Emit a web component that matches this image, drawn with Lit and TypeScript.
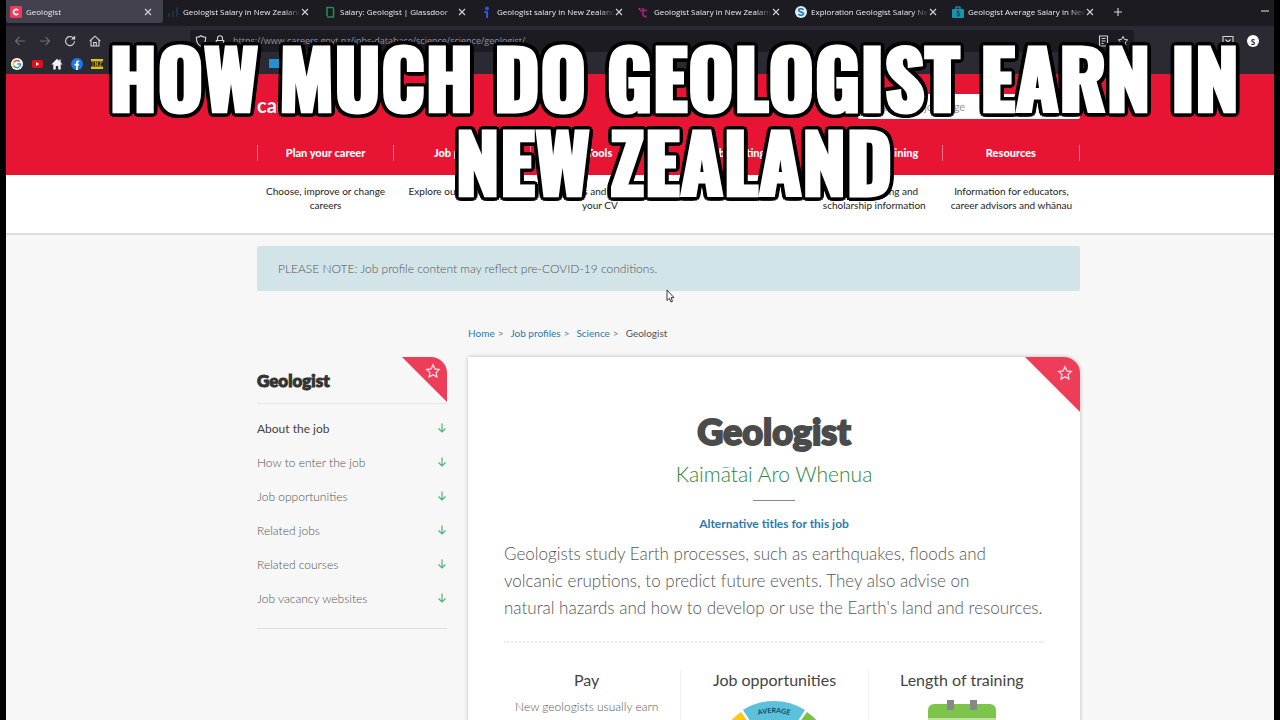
import { LitElement, html, css, svg } from "lit";
import { customElement } from "lit/decorators.js";
import { classMap } from "lit/directives/class-map.js";

const star = svg`<path d="M12 2.8l2.9 6 6.5.9-4.7 4.6 1.1 6.6-5.8-3.1-5.8 3.1 1.1-6.6L2.6 9.7l6.5-.9z" />`;

const tabIcons = [
  svg`<rect width="12" height="12" rx="1" fill="#f0375c" /><path d="M8.2 4.4A2.6 2.6 0 1 0 8.2 7.6" fill="none" stroke="#fff" stroke-width="1.7" />`,
  svg`<path d="M1 11V7h2v4M5 11V5h2v6M9 11V1h2v10" fill="#1c3345" />`,
  svg`<path d="M3 10V1.5h6.500M3 11h6.500V1.500" fill="none" stroke="#1f8f45" stroke-width="1.600" />`,
  svg`<circle cx="6" cy="2.500" r="2" fill="#2f55d8" /><path d="M3 5.200h4V12H5V7H3z" fill="#2f55d8" />`,
  svg`<path d="M5 2v6.500q0 2 2.500 2H9M2 4.500h7" fill="none" stroke="#8f2274" stroke-width="2" /><circle cx="1.500" cy="3" r="1" fill="#d6336c" />`,
  svg`<circle cx="6" cy="6" r="6" fill="#d9eefa" /><path d="M8.500 3.700C7 2 3.500 2.600 3.700 4.400c.2 2 4.800 1.200 4.800 3.300C8.400 9.500 5 9.800 3.400 8.200" fill="none" stroke="#2473a8" stroke-width="1.600" />`,
  svg`<path d="M4 3V1h4v2" fill="none" stroke="#21a3bd" stroke-width="1.200" /><rect x="0" y="3" width="12" height="9" rx="1" fill="#1c93ad" /><path d="M7.500 5.200H5v1.900h2.500V9.500H4.500M6 4v7" fill="none" stroke="#0c5468" stroke-width=".9" />`,
];

const tabs = [
  "Geologist",
  "Geologist Salary in New Zealand - Average",
  "Salary: Geologist | Glassdoor",
  "Geologist salary in New Zealand",
  "Geologist Salary in New Zealand",
  "Exploration Geologist Salary New Zealand",
  "Geologist Average Salary in New Zealand",
];

const bookmarks = [
  { name: "Google", icon: svg`<circle cx="6" cy="6" r="6" fill="#fff" /><g fill="none" stroke-width="1.500"><path d="M8.600 3.500A3.600 3.600 0 0 0 2.900 4.200" stroke="#ea4335" /><path d="M2.900 4.200a3.600 3.600 0 0 0 0 3.600" stroke="#fbbc05" /><path d="M2.900 7.800a3.600 3.600 0 0 0 5.500 1" stroke="#34a853" /><path d="M8.400 8.800A3.600 3.600 0 0 0 9.600 6H6.200" stroke="#4285f4" /></g>` },
  { name: "YouTube", icon: svg`<rect x="1" y="2" width="11" height="8" rx="2" fill="#e60d18" /><path d="M5 4l3.200 2L5 8z" fill="#fff" />` },
  { name: "House", icon: svg`<path d="M6 .8L.8 6v1l1.500-1v5.500h2.500V8h2.400v3.500h2.500V6l1.500 1V6L9.700 4.500V1.500H8.300v1.500z" fill="#f2f2f2" />` },
  { name: "Facebook", icon: svg`<circle cx="6" cy="6" r="6" fill="#1877f2" /><path d="M5 12V7.500H3.500V5.800H5V4.600C5 3 6 2.300 8.200 2.600V4c-1-.1-1.400.1-1.400.8v1h1.400L8 7.500H6.800V12z" fill="#fff" />` },
  { name: "INZ", icon: svg`<rect x="0" y="1" width="12" height="10" fill="#e0c21c" /><path d="M0 3.500h12v5H0z" fill="#262208" /><path d="M2 4v4M4.500 8V4l2 4V4M8.500 4.300h2L8.500 7.700h2" fill="none" stroke="#e0c21c" stroke-width=".7" />` },
];

const sections = [
  { title: "Plan your career", text: "Choose, improve or change careers" },
  { title: "Job profiles", text: "Explore our job database" },
  { title: "Tools", text: "Quizzes and ideas for your\u00a0CV" },
  { title: "Job hunting", text: "Find work" },
  { title: "Study and training", text: "Course, training and scholarship information" },
  { title: "Resources", text: "Information for educators, career advisors and whānau" },
];

const contents = [
  "About the job",
  "How to enter the job",
  "Job opportunities",
  "Related jobs",
  "Related courses",
  "Job vacancy websites",
];

@customElement("browser-chrome")
export class BrowserChrome extends LitElement {
  static styles = css`
    :host { display: block; background: #2b2a33; font-family: "Open Sans", sans-serif; color: #d4d4dc; }
    button { border: 0; padding: 0; background: none; color: inherit; font: inherit; display: flex; align-items: center; }
    svg { display: block; flex: none; }
    .tabs { display: flex; align-items: flex-start; height: 26px; background: #1c1b22; }
    .tab { flex: 0 1 157px; min-width: 0; height: 23px; display: flex; align-items: center; padding: 0 11px 0 4px; box-sizing: border-box; }
    .tab.active { background: #42414d; border-radius: 0 0 3px 3px; }
    .pick { flex: 1; min-width: 0; gap: 4px; font-size: 8px; line-height: 12px; color: #ececf2; }
    .name { white-space: nowrap; overflow: hidden; flex: 1; text-align: left; mask-image: linear-gradient(to right, #000 86%, transparent); }
    .line { fill: none; stroke: currentColor; stroke-width: 1.1; }
    .add { margin: 6px 0 0 7px; }
    .min { margin: 6px 3px 0 auto; }
    .tools { display: flex; align-items: center; height: 30px; padding: 0 15px 0 8px; gap: 13px; }
    .dim { color: #6c6b75; }
    .url { flex: 1; margin-left: 76px; margin-right: 75px; height: 22px; border-radius: 3px; background: #1c1b22; display: flex; align-items: center; gap: 7px; padding: 0 5px; }
    .address { flex: 1; min-width: 0; border: 0; padding: 0; background: none; color: #8f8f9a; font: 9px/14px "Open Sans", sans-serif; outline: none; }
    .account { width: 12px; height: 12px; border-radius: 50%; background: #fff; color: #2b2a33; justify-content: center; font-size: 8px; font-weight: 700; }
    .marks { display: flex; height: 18px; gap: 8px; padding: 2px 5px 0; box-sizing: border-box; align-items: flex-start; }
    .far { margin-left: 158px; }
  `;

  render() {
    return html`
      <div class="tabs">
        ${tabs.map(
          (name, i) => html`<div class=${classMap({ tab: true, active: i === 0 })}>
            <button class="pick"><svg width="12" height="12" viewBox="0 0 12 12">${tabIcons[i]}</svg><span class="name">${name}</span></button>
            <button aria-label="Close tab"><svg width="8" height="8" viewBox="0 0 8 8"><path class="line" d="M1 1l6 6M7 1L1 7" /></svg></button>
          </div>`
        )}
        <button class="add" aria-label="New tab"><svg width="12" height="12" viewBox="0 0 12 12"><path class="line" d="M6 2v8M2 6h8" /></svg></button>
        <button class="min" aria-label="Minimise"><svg width="12" height="12" viewBox="0 0 12 12"><path class="line" d="M2 5h8" /></svg></button>
      </div>
      <div class="tools">
        <button class="dim" aria-label="Back"><svg width="12" height="12" viewBox="0 0 12 12"><path class="line" d="M11 6H1.500M5.500 2l-4 4 4 4" /></svg></button>
        <button class="dim" aria-label="Forward"><svg width="12" height="12" viewBox="0 0 12 12"><path class="line" d="M1 6h9.500M6.500 2l4 4-4 4" /></svg></button>
        <button aria-label="Reload"><svg width="12" height="12" viewBox="0 0 12 12"><path class="line" d="M10.500 6.300A4.500 4.500 0 1 1 9 2.700" /><path d="M7 4.600h4.200V.5z" fill="currentColor" /></svg></button>
        <button aria-label="Home"><svg width="12" height="12" viewBox="0 0 12 12"><path class="line" d="M.8 6L6 1.200 11.200 6M2 5v6h8V5M4.700 11V7.500h2.600V11" /></svg></button>
        <div class="url">
          <svg width="12" height="12" viewBox="0 0 12 12"><path class="line" d="M6 .8C4.500 2 3 2.200 1.300 2.200c0 4.300 1 7.300 4.700 9 3.700-1.700 4.700-4.700 4.700-9C9 2.200 7.500 2 6 .8z" /></svg>
          <svg width="12" height="12" viewBox="0 0 12 12"><path class="line" d="M3.500 5.500V3.200a2.500 2.500 0 0 1 5 0v2.300M2.300 5.500h7.400v5.700H2.300z" /></svg>
          <input class="address" aria-label="Address" value="https://www.careers.govt.nz/jobs-database/science/science/geologist/" />
          <svg width="12" height="12" viewBox="0 0 12 12"><path class="line" d="M1.500 1h8v10h-8zM3.500 3.500h4M3.500 6h4M3.500 8.500h2" /></svg>
          <svg width="12" height="12" viewBox="0 0 24 24"><g fill="none" stroke="currentColor" stroke-width="2">${star}</g></svg>
        </div>
        <button aria-label="Pocket"><svg width="12" height="12" viewBox="0 0 12 12"><path class="line" d="M1 1.500h10v5a5 5 0 0 1-10 0zM3.500 4.500L6 7l2.500-2.500" /></svg></button>
        <button class="account" aria-label="Account">S</button>
      </div>
      <div class="marks">
        ${bookmarks.map((b) => html`<button aria-label=${b.name}><svg width="12" height="12" viewBox="0 0 12 12">${b.icon}</svg></button>`)}
        <button class="far" aria-label="Mail"><svg width="12" height="12" viewBox="0 0 12 12"><rect y="1" width="12" height="9" fill="#2590d4" /></svg></button>
      </div>
    `;
  }
}

@customElement("site-header")
export class SiteHeader extends LitElement {
  static styles = css`
    :host { display: block; color: #fff; font-family: Lato, sans-serif; background: #fff; border-bottom: 2px solid #dcdcdc; }
    .band { background: #e81434; padding-left: 57px; }
    .wrap { max-width: 823px; margin: 0 auto; }
    .top { display: flex; justify-content: space-between; align-items: flex-start; padding-top: 20px; }
    .logo { color: #fff; text-decoration: none; font-size: 20px; line-height: 22px; font-weight: 700; }
    .search { width: 222px; height: 25px; box-sizing: border-box; border: 0; border-radius: 2px; padding: 0 12px; font: 11px Lato, sans-serif; }
    .search::placeholder { color: #999; }
    .nav { display: grid; grid-template-columns: repeat(6, 1fr); padding: 26px 0 14px; border: 0; }
    .link { color: #fff; text-decoration: none; font-size: 11px; line-height: 16px; font-weight: 900; text-align: center; border-right: 1px solid #f4778a; }
    .link:first-child { border-left: 1px solid #f4778a; }
    .below { padding-left: 57px; }
    .notes { display: grid; grid-template-columns: repeat(6, 1fr); padding: 9px 0 21px; color: #222; font-size: 10px; line-height: 14px; font-weight: 400; text-align: center; }
    .note { margin: 0; padding: 0 5px; }
  `;

  render() {
    return html`
      <div class="band">
        <div class="wrap">
          <div class="top">
            <a class="logo" href="#">careers</a>
            <input class="search" type="search" aria-label="Search" placeholder="Search our job page" />
          </div>
          <nav class="nav">${sections.map((s) => html`<a class="link" href="#">${s.title}</a>`)}</nav>
        </div>
      </div>
      <div class="below"><div class="wrap notes">${sections.map((s) => html`<p class="note">${s.text}</p>`)}</div></div>
    `;
  }
}

@customElement("save-corner")
export class SaveCorner extends LitElement {
  static styles = css`
    :host { display: block; width: 45px; height: 45px; }
    .corner { width: 100%; height: 100%; border: 0; padding: 0; background: #ee3d59; border-top-right-radius: 16px; clip-path: polygon(0 0, 100% 0, 100% 100%); display: flex; justify-content: flex-end; align-items: flex-start; }
    .icon { margin: 14% 13% 0 0; fill: none; stroke: #ffd9de; stroke-width: 2; }
  `;

  render() {
    return html`<button class="corner" aria-label="Save this job"><svg class="icon" width="16" height="16" viewBox="0 0 24 24">${star}</svg></button>`;
  }
}

@customElement("job-profile")
export class JobProfile extends LitElement {
  static styles = css`
    :host { display: block; padding: 11px 0 0 57px; font-family: Lato, sans-serif; color: #555; font-weight: 300; }
    a { color: #2a7aaf; text-decoration: none; }
    .wrap { max-width: 823px; margin: 0 auto; display: grid; grid-template-columns: 190px minmax(0, 1fr); column-gap: 21px; }
    .notice { grid-column: 1 / -1; margin: 0; padding: 14px 21px 13px; border-radius: 2px; background: #d2e4e8; font-size: 12px; line-height: 18px; }
    .crumbs { grid-column: 2; display: flex; margin: 34px 0 16px; padding: 0; list-style: none; font-size: 10px; line-height: 16px; font-weight: 400; gap: 7px; }
    .crumb:not(:last-child)::after { content: ">"; margin-left: 3px; color: #777; }
    .side { grid-column: 1; }
    .head { display: flex; justify-content: space-between; border-bottom: 1px solid #e6e6e6; height: 46px; }
    .name { margin: 14px 0 0; font-size: 17px; line-height: 20px; font-weight: 900; color: #333; -webkit-text-stroke: 1px #333; }
    .list { margin: 0; padding: 7px 0 13px; list-style: none; border-bottom: 1px solid #dedede; }
    .item { display: flex; align-items: center; justify-content: space-between; height: 34px; font-size: 12px; }
    .item.current { font-weight: 400; color: #444; }
    .arrow { fill: none; stroke: #4cb774; stroke-width: 1.2; }
    .card { position: relative; background: #fff; box-shadow: 0 0 4px rgba(0, 0, 0, 0.24); border-top-right-radius: 16px; padding: 53px 25px 0; min-height: 420px; text-align: center; }
    .save { position: absolute; top: 0; right: 0; width: 55px; height: 55px; }
    .title { margin: 0; font-size: 36px; line-height: 42px; font-weight: 900; color: #4b4b4b; -webkit-text-stroke: 2px #4b4b4b; }
    .maori { margin: 8px 0 0; font-size: 21px; line-height: 28px; font-weight: 300; color: #2f8540; }
    .rule { width: 42px; height: 1px; margin: 12px auto 14px; border: 0; background: #888; }
    .alt { display: block; font-size: 12px; line-height: 18px; font-weight: 700; }
    .intro { margin: 7px 11px 0; padding-bottom: 20px; border-bottom: 2px dotted #e8e8e8; text-align: left; font-size: 17px; line-height: 27px; }
    .facts { display: grid; grid-template-columns: repeat(3, 1fr); margin-top: 27px; }
    .fact { border-left: 1px solid #f1f1f1; min-height: 80px; font-size: 12px; line-height: 18px; }
    .fact:first-child { border-left: 0; }
    .fact svg { display: block; margin: 10px auto 0; }
    .sub { margin: 0; font-size: 16px; line-height: 20px; font-weight: 400; color: #444; }
    .pay { margin: 8px 0 0; }
    .dial { font: 700 7px Lato, sans-serif; fill: #144a5c; }
  `;

  render() {
    return html`
      <div class="wrap">
        <p class="notice">PLEASE NOTE: Job profile content may reflect pre-COVID-19 conditions.</p>
        <ol class="crumbs">
          <li class="crumb"><a href="#">Home</a></li>
          <li class="crumb"><a href="#">Job profiles</a></li>
          <li class="crumb"><a href="#">Science</a></li>
          <li class="crumb">Geologist</li>
        </ol>
        <aside class="side">
          <div class="head"><h2 class="name">Geologist</h2><save-corner></save-corner></div>
          <ul class="list">
            ${contents.map(
              (c, i) => html`<li class=${classMap({ item: true, current: i === 0 })}>
                <span>${c}</span><svg class="arrow" width="10" height="10" viewBox="0 0 10 10"><path d="M5 .5v8.500M1.500 5.500L5 9l3.500-3.500" /></svg>
              </li>`
            )}
          </ul>
        </aside>
        <main class="card">
          <save-corner class="save"></save-corner>
          <h1 class="title">Geologist</h1>
          <p class="maori">Kaimātai Aro Whenua</p>
          <hr class="rule" />
          <a class="alt" href="#">Alternative titles for this job</a>
          <p class="intro">Geologists study Earth processes, such as earthquakes, floods and<br />volcanic eruptions, to predict future events. They also advise on<br />natural hazards and how to develop or use the Earth's land and resources.</p>
          <div class="facts">
            <section class="fact"><h3 class="sub">Pay</h3><p class="pay">New geologists usually earn</p></section>
            <section class="fact">
              <h3 class="sub">Job opportunities</h3>
              <svg width="120" height="60" viewBox="0 0 120 60">
                <path d="M2 59A58 58 0 0 1 27 12L43 34A30 30 0 0 0 30 59z" fill="#fac815" />
                <path d="M29 10A58 58 0 0 1 91 10L76 33A30 30 0 0 0 44 33z" fill="#5cc1da" />
                <path d="M93 12A58 58 0 0 1 118 59H90A30 30 0 0 0 77 34z" fill="#7ac143" />
                <path id="arc" d="M12 30A56 56 0 0 1 108 30" transform="translate(0 10)" fill="none" />
                <text class="dial" text-anchor="middle"><textPath href="#arc" startOffset="50%">AVERAGE</textPath></text>
              </svg>
            </section>
            <section class="fact">
              <h3 class="sub">Length of training</h3>
              <svg width="70" height="60" viewBox="0 0 70 60">
                <rect x="1" y="4" width="68" height="60" rx="6" fill="#7cc44a" /><path d="M1 19h68" stroke="#fff" stroke-width="1" />
                <path d="M20 0h7v10h-7zM43 0h7v10h-7z" fill="#888" />
              </svg>
            </section>
          </div>
        </main>
      </div>
    `;
  }
}

@customElement("app-root")
export class AppRoot extends LitElement {
  static styles = css`
    :host { display: block; position: relative; height: 100vh; overflow: hidden; background: #000; }
    .page { height: 100%; margin: 0 6px; overflow: hidden; background: #f7f7f7; }
    .caption {
      position: absolute; top: 35px; left: 68px; right: 0; margin: 0;
      text-align: center; white-space: nowrap; color: #fff;
      font: 700 79px/84px Oswald, Anton, "Roboto Condensed", sans-serif;
      -webkit-text-stroke: 3px #fff; stroke-linejoin: round;
      text-shadow: 5px 0 #000, 5px 2px #000, 4px 4px #000, 2px 5px #000, 0 5px #000, -2px 5px #000, -4px 4px #000, -5px 2px #000,
        -5px 0 #000, -5px -2px #000, -4px -4px #000, -2px -5px #000, 0 -5px #000, 2px -5px #000, 4px -4px #000, 5px -2px #000;
    }
    .pointer { position: absolute; left: 52%; top: 289px; }
  `;

  render() {
    return html`
      <div class="page">
        <browser-chrome></browser-chrome>
        <site-header></site-header>
        <job-profile></job-profile>
      </div>
      <svg class="pointer" width="9" height="14" viewBox="0 0 9 14"><path d="M1 1v10.500l2.400-2.200 1.500 3.700 1.600-.7-1.500-3.600H8z" fill="#fff" stroke="#222" stroke-width=".9" /></svg>
      <p class="caption">HOW MUCH DO GEOLOGIST EARN IN<br />NEW ZEALAND</p>
    `;
  }
}
